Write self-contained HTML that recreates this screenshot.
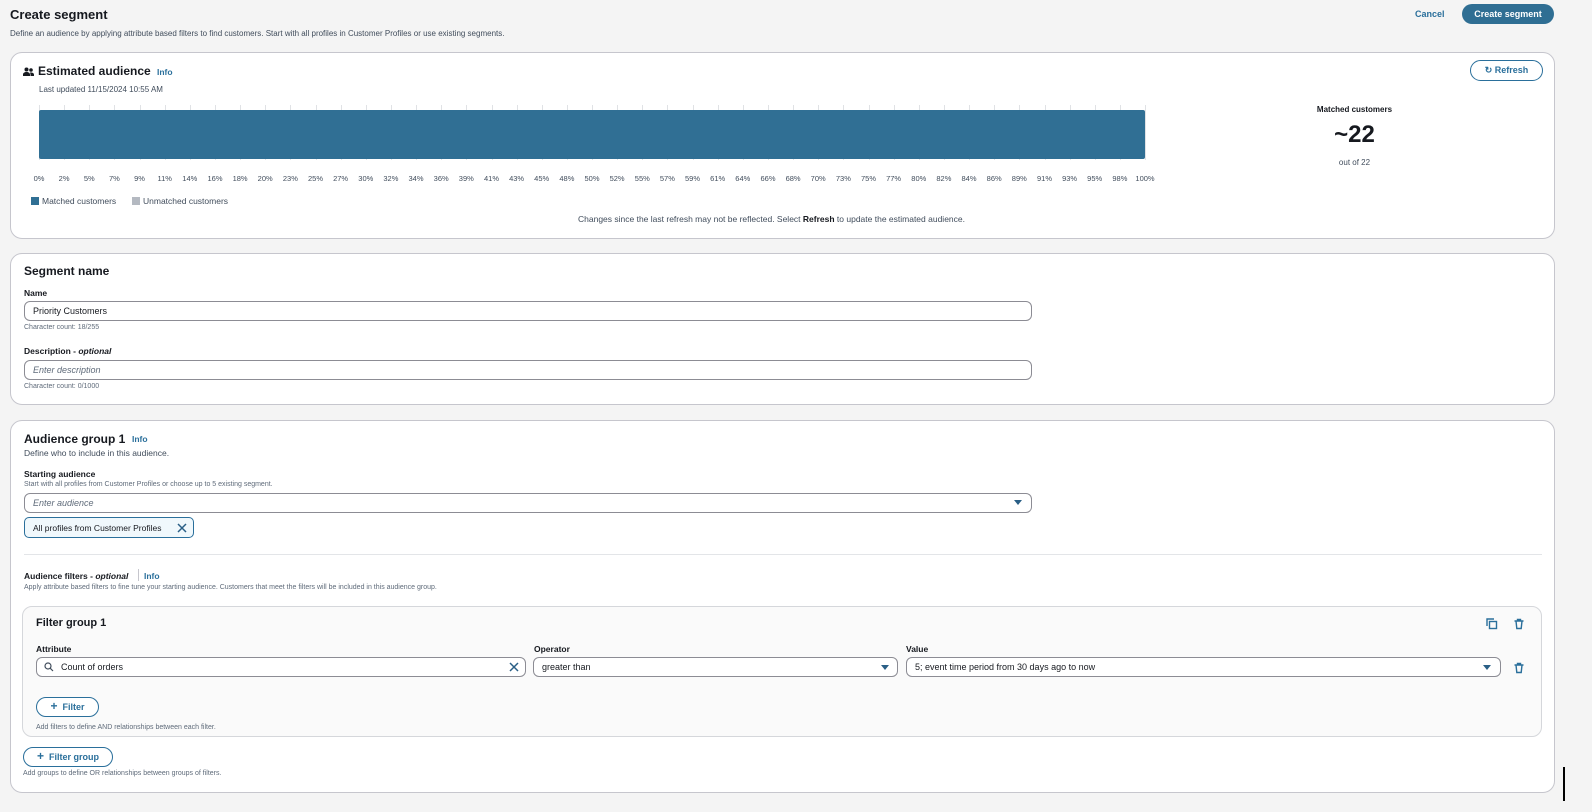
<!DOCTYPE html>
<html><head><meta charset="utf-8"><style>
*{box-sizing:border-box;margin:0;padding:0}
body{width:1592px;height:812px;background:#f4f4f4;font-family:"Liberation Sans",sans-serif;color:#16191f;position:relative;overflow:hidden;font-size:9px}
.a{position:absolute;white-space:nowrap}
.panel{position:absolute;background:#fff;border:1px solid #c6c6cd;border-radius:12px}
.h{font-weight:bold;color:#16191f}
.link{font-weight:bold;color:#2a6f9b}
.inp{position:absolute;border:1px solid #8c8c94;border-radius:6px;background:#fff;height:20px;font-size:9px;padding:4px 8px;color:#16191f}
.ph{font-style:italic;color:#5f6b7a}
.sm{font-size:7px;color:#5f6b7a}
.btn{position:absolute;border:1.5px solid #2a6f9b;border-radius:12px;color:#2a6f9b;font-weight:bold;font-size:9px;text-align:center;background:#fff}
.tri{position:absolute;width:0;height:0;border-left:4px solid transparent;border-right:4px solid transparent;border-top:5px solid #2a5f86}
</style></head><body>
<div class="a h" style="left:10px;top:7px;font-size:13px">Create segment</div>
<div class="a" style="left:10px;top:29px;font-size:8px;color:#414d5c">Define an audience by applying attribute based filters to find customers. Start with all profiles in Customer Profiles or use existing segments.</div>
<div class="a link" style="left:1415px;top:9px;font-size:9px">Cancel</div>
<div class="a" style="left:1462px;top:4px;width:92px;height:20px;border-radius:10px;background:#2f6e93;color:#fff;font-weight:bold;font-size:9px;text-align:center;line-height:20px">Create segment</div>

<div class="panel" style="left:10px;top:52px;width:1545px;height:187px"></div>
<svg class="a" style="left:23px;top:67px" width="11" height="9" viewBox="0 0 11 9"><circle cx="3.5" cy="2.5" r="2" fill="#16191f"/><circle cx="8" cy="3" r="1.8" fill="#16191f"/><path d="M0 9v-1.5c0-1.5 1.5-2.5 3.5-2.5s3.5 1 3.5 2.5V9z M7.5 9V7.5c0-.8-.3-1.4-.8-1.9 .4-.1.8-.1 1.3-.1 1.7 0 3 .9 3 2.2V9z" fill="#16191f"/></svg>
<div class="a h" style="left:38px;top:64px;font-size:12px">Estimated audience</div>
<div class="a link" style="left:157px;top:67px;font-size:8.5px">Info</div>
<div class="a" style="left:39px;top:85px;font-size:8px;color:#414d5c">Last updated 11/15/2024 10:55 AM</div>
<div class="btn" style="left:1470px;top:60px;width:73px;height:21px;line-height:18px">&#8635; Refresh</div>
<div class="a h" style="left:1312px;top:105px;font-size:8px;width:85px;text-align:center">Matched customers</div>
<div class="a h" style="left:1312px;top:121px;font-size:24px;width:85px;text-align:center">~22</div>
<div class="a" style="left:1312px;top:158px;font-size:8px;width:85px;text-align:center;color:#414d5c">out of 22</div>
<div id="grid"></div>
<div class="a" style="left:39px;top:110px;width:1106px;height:49px;background:#306f94;border-radius:2px"></div>
<div class="a" style="left:31px;top:197px;width:8px;height:8px;background:#306f94"></div>
<div class="a" style="left:42px;top:196px;font-size:8.5px;color:#414d5c">Matched customers</div>
<div class="a" style="left:132px;top:197px;width:8px;height:8px;background:#b4b9c1"></div>
<div class="a" style="left:143px;top:196px;font-size:8.5px;color:#414d5c">Unmatched customers</div>
<div class="a" style="left:578px;top:214px;font-size:8.5px;color:#414d5c">Changes since the last refresh may not be reflected. Select <b style="color:#16191f">Refresh</b> to update the estimated audience.</div>

<div class="panel" style="left:10px;top:253px;width:1545px;height:152px"></div>
<div class="a h" style="left:24px;top:264px;font-size:12px">Segment name</div>
<div class="a h" style="left:24px;top:288px;font-size:8.5px">Name</div>
<div class="inp" style="left:24px;top:301px;width:1008px">Priority Customers</div>
<div class="a sm" style="left:24px;top:324px">Character count: 18/255</div>
<div class="a h" style="left:24px;top:346px;font-size:8.5px">Description - <i>optional</i></div>
<div class="inp ph" style="left:24px;top:360px;width:1008px">Enter description</div>
<div class="a sm" style="left:24px;top:383px">Character count: 0/1000</div>

<div class="panel" style="left:10px;top:420px;width:1545px;height:373px"></div>
<div class="a h" style="left:24px;top:432px;font-size:12px">Audience group 1</div>
<div class="a link" style="left:132px;top:434px;font-size:8.5px">Info</div>
<div class="a" style="left:24px;top:448px;font-size:8.5px;color:#414d5c">Define who to include in this audience.</div>
<div class="a h" style="left:24px;top:469px;font-size:8.5px">Starting audience</div>
<div class="a sm" style="left:24px;top:481px">Start with all profiles from Customer Profiles or choose up to 5 existing segment.</div>
<div class="inp ph" style="left:24px;top:493px;width:1008px">Enter audience</div>
<div class="tri" style="left:1014px;top:500px"></div>
<div class="a" style="left:24px;top:517px;width:170px;height:21px;border:1px solid #2a6f9b;background:#f0f8fc;border-radius:5px;font-size:8.5px;padding:5px 8px;color:#16191f">All profiles from Customer Profiles</div>
<svg class="a" style="left:177px;top:523px" width="10" height="10" viewBox="0 0 10 10" stroke="#2a5f86" stroke-width="1.5"><path d="M1 1l8 8M9 1l-8 8"/></svg>
<div class="a" style="left:24px;top:554px;width:1518px;height:1px;background:#e3e5e8"></div>
<div class="a h" style="left:24px;top:571px;font-size:8.5px">Audience filters - <i>optional</i></div>
<div class="a" style="left:138px;top:569px;width:1px;height:12px;background:#c6c6cd"></div>
<div class="a link" style="left:144px;top:571px;font-size:8.5px">Info</div>
<div class="a sm" style="left:24px;top:584px">Apply attribute based filters to fine tune your starting audience. Customers that meet the filters will be included in this audience group.</div>

<div class="a" style="left:22px;top:606px;width:1520px;height:131px;background:#fafafa;border:1px solid #d5d7db;border-radius:10px"></div>
<div class="a h" style="left:36px;top:617px;font-size:11px">Filter group 1</div>
<svg class="a" style="left:1486px;top:618px" width="12" height="12" viewBox="0 0 12 12" fill="none" stroke="#2a6f9b" stroke-width="1.4"><path d="M1 8V1h7"/><rect x="3.5" y="3.5" width="7" height="7"/></svg>
<svg class="a" style="left:1513px;top:618px" width="12" height="12" viewBox="0 0 12 12" fill="none" stroke="#2a6f9b" stroke-width="1.4"><path d="M1.5 3h9M4.5 3V1.5h3V3M3 3l.8 7.5h4.4L9 3"/></svg>
<div class="a h" style="left:36px;top:644px;font-size:8.5px">Attribute</div>
<div class="a h" style="left:534px;top:644px;font-size:8.5px">Operator</div>
<div class="a h" style="left:906px;top:644px;font-size:8.5px">Value</div>
<div class="inp" style="left:36px;top:657px;width:490px;padding-left:24px">Count of orders</div>
<svg class="a" style="left:44px;top:662px" width="10" height="10" viewBox="0 0 10 10" fill="none" stroke="#414d5c" stroke-width="1.2"><circle cx="4" cy="4" r="3"/><path d="M6.3 6.3L9 9"/></svg>
<svg class="a" style="left:509px;top:662px" width="10" height="10" viewBox="0 0 10 10" stroke="#2a5f86" stroke-width="1.5"><path d="M1 1l8 8M9 1l-8 8"/></svg>
<div class="inp" style="left:533px;top:657px;width:365px">greater than</div>
<div class="tri" style="left:881px;top:665px"></div>
<div class="inp" style="left:906px;top:657px;width:595px">5; event time period from 30 days ago to now</div>
<div class="tri" style="left:1483px;top:665px"></div>
<svg class="a" style="left:1513px;top:662px" width="12" height="12" viewBox="0 0 12 12" fill="none" stroke="#2a6f9b" stroke-width="1.4"><path d="M1.5 3h9M4.5 3V1.5h3V3M3 3l.8 7.5h4.4L9 3"/></svg>
<div class="btn" style="left:36px;top:697px;width:63px;height:20px;line-height:17px"><span style="font-size:12px">+</span>&nbsp; Filter</div>
<div class="a sm" style="left:36px;top:724px">Add filters to define AND relationships between each filter.</div>
<div class="btn" style="left:23px;top:747px;width:90px;height:20px;line-height:17px"><span style="font-size:12px">+</span>&nbsp; Filter group</div>
<div class="a sm" style="left:23px;top:770px">Add groups to define OR relationships between groups of filters.</div>
<div class="a" style="left:1563px;top:767px;width:2px;height:34px;background:#000"></div>
<script>
var g=document.getElementById('grid'),h='';
for(var i=0;i<45;i++){var x=39+i*(1106/44);var p=Math.floor(i*100/44+0.5);if(i==44)p=100;
h+='<div class="a" style="left:'+x.toFixed(1)+'px;top:105px;width:1px;height:55px;background:#e0e2e5"></div>';
h+='<div class="a" style="left:'+(x-15).toFixed(1)+'px;top:174px;width:30px;text-align:center;font-size:7.5px;color:#414d5c">'+p+'%</div>';}
g.innerHTML=h;
</script>
</body></html>
